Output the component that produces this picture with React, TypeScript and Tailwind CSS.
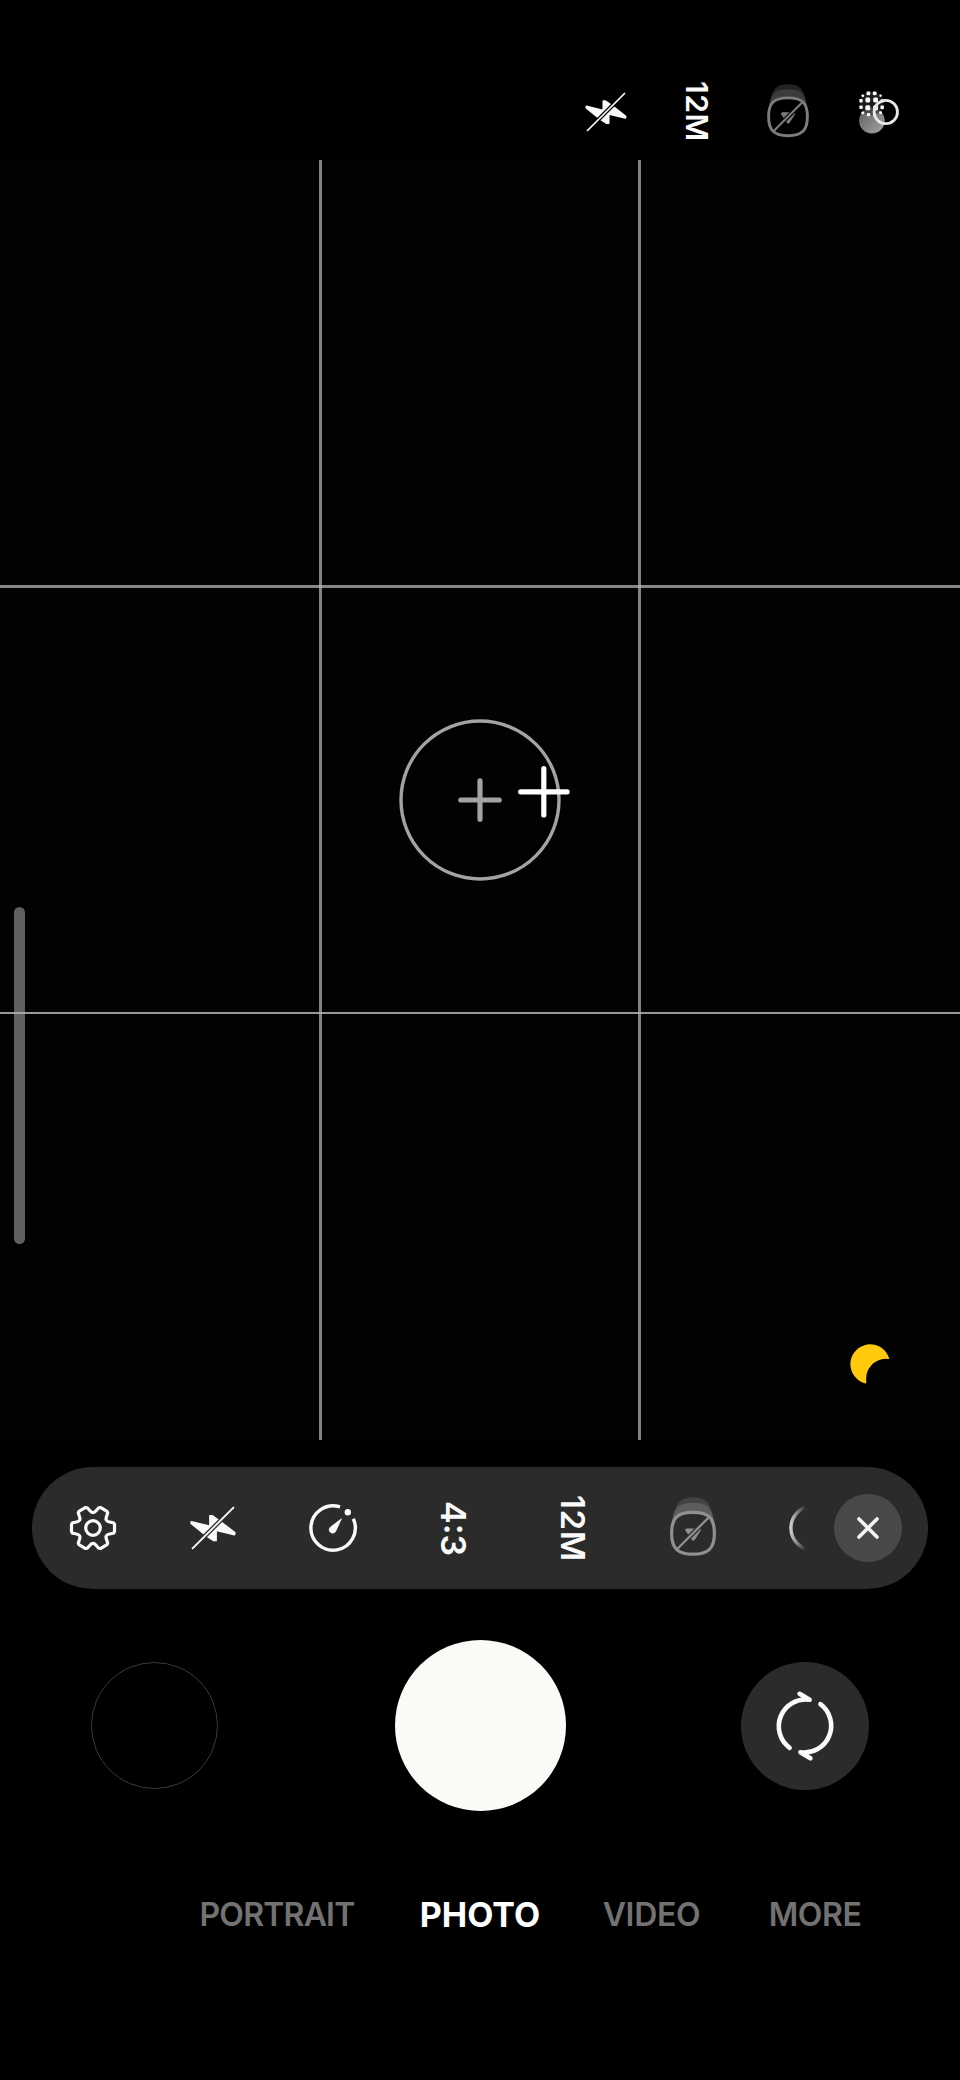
import React from "react";
import clsx from "clsx";

const modes = [
    { label: "PORTRAIT", box: "w-[154px] ml-[200px] tracking-[-0.8px]", active: false },
    { label: "PHOTO", box: "w-[120px] ml-[66px]", active: true },
    { label: "VIDEO", box: "w-[97px] ml-[63px] tracking-[-0.3px]", active: false },
    { label: "MORE", box: "w-[92px] ml-[69px] tracking-[-0.4px]", active: false },
];

// One tooth of the gear, pointing right; the other five are rotations of it
const tooth = [
    [16.5, -6],
    [20.4, -5.2],
    [21.5, -3.8],
    [21.5, 3.8],
    [20.4, 5.2],
    [16.5, 6],
    [11.8, 6.8],
];

function gearPath() {
    let d = "";
    for (let i = 0; i < 6; i++) {
        const a = (i * Math.PI) / 3;
        const p = tooth.map(([x, y]) => {
            const px = x * Math.cos(a) - y * Math.sin(a);
            const py = x * Math.sin(a) + y * Math.cos(a);
            return `${px.toFixed(2)} ${py.toFixed(2)}`;
        });
        const b = a + Math.PI / 3;
        const nx = 16.5 * Math.cos(b) + 6 * Math.sin(b);
        const ny = 16.5 * Math.sin(b) - 6 * Math.cos(b);
        d += `${i === 0 ? "M" : "L"}${p[0]}L${p[1]}L${p[2]}L${p[3]}L${p[4]}L${p[5]}Q${p[6]} ${nx.toFixed(2)} ${ny.toFixed(2)}`;
    }
    return d + "Z";
}

function GearIcon() {
    return (
        <svg viewBox="-32 -32 64 64" className="h-16 w-16" fill="none" stroke="#fafafa" strokeWidth="3.2" strokeLinejoin="round">
            <path d={gearPath()} />
            <circle r="7.3" />
        </svg>
    );
}

function FlashOffIcon({ className, bg }: { className: string; bg: string }) {
    return (
        <svg viewBox="-32 -32 64 64" className={className}>
            <path
                d="M-21.6 -6.2L-3 -1.6V-12.2L-0.6 -12L7 -6.6L21.7 4.8L21.4 6.6L3 2.2V12.4H0.8L-7 7.4L-21.8 -4.6Z"
                fill="#fafafa"
                stroke="#fafafa"
                strokeWidth="1.8"
                strokeLinejoin="round"
            />
            <path d="M-20.4 20.4L20.4 -20.4" stroke={bg} strokeWidth="4.4" />
            <path d="M-20.4 20.4L20.4 -20.4" stroke="#fafafa" strokeWidth="1.9" strokeLinecap="round" />
        </svg>
    );
}

function TimerIcon() {
    return (
        <svg viewBox="-32 -32 64 64" className="h-16 w-16">
            <path d="M7 -21.1A22.2 22.2 0 1 0 20.3 -9.2" fill="none" stroke="#fafafa" strokeWidth="3.4" />
            <circle cx="14.8" cy="-15.8" r="3.2" fill="#fafafa" />
            <path d="M8.4 -9.2L-2.4 -1A3.4 3.4 0 1 0 2.8 3Z" fill="#fafafa" stroke="#fafafa" strokeWidth="0.8" strokeLinejoin="round" />
        </svg>
    );
}

function MotionOffIcon({ className, bg }: { className: string; bg: string }) {
    const onBlack = bg === "#000000";
    const line = onBlack ? "#7c7c7c" : "#909090";
    return (
        <svg viewBox="-32 -32 64 64" className={className}>
            <path d="M-19 2V-14C-17 -26 -12 -30.6 0 -30.6S17 -26 19 -14V2Z" fill={onBlack ? "#242424" : "#434343"} />
            <path d="M-20.5 4V-9C-18.5 -21 -13 -25.2 0 -25.2S18.5 -21 20.5 -9V4Z" fill={onBlack ? "#3c3c3c" : "#5c5c5c"} />
            <path
                d="M0 -15.6C16 -15.6 21.4 -9.8 21.4 5.2S15.4 26.2 0 26.2S-21.4 20.2 -21.4 5.2S-16 -15.6 0 -15.6Z"
                fill={bg}
                stroke={line}
                strokeWidth="3.2"
            />
            <path d="M-6.4 0.4H6.8Q8.8 0.8 7.6 2.8L1.6 12Q0.4 13.4 -1 12L-7.4 2.8Q-8.4 0.8 -6.4 0.4Z" fill={line} />
            <path d="M-14.6 19.8L15 -9.8" stroke={bg} strokeWidth="4.8" />
            <path d="M-16 21.2L16.4 -11.2" stroke={line} strokeWidth="2.3" />
        </svg>
    );
}

const dots = [
    [-10.6, -18.6, 1.9], [-4.3, -18.6, 1.9],
    [-16.2, -16.2, 1.3], [1.6, -16.4, 1.2],
    [-18, -11.2, 1.7], [-11.2, -12, 2.4], [-3.4, -12, 2.4], [3.2, -11.2, 1.6],
    [-18, -4.8, 1.7], [-11.2, -4.2, 2.5], [-3.4, -4.2, 2.5], [3.2, -4.6, 1.8],
    [-16.2, 0.8, 1.4], [-10.4, 2.6, 1.7], [-4.3, 2.6, 1.6], [1.6, 0.6, 1.4],
];

function FilterIcon() {
    return (
        <svg viewBox="-32 -32 64 64" className="h-16 w-16">
            <defs>
                <linearGradient id="ball" x1="0" y1="0" x2="1" y2="1">
                    <stop offset="0" stopColor="#5c5c5c" />
                    <stop offset="1" stopColor="#a6a6a6" />
                </linearGradient>
            </defs>
            <circle cx="-7.1" cy="8.8" r="12.8" fill="url(#ball)" />
            <circle cx="-7.3" cy="-8.4" r="12" fill="#303030" fillOpacity="0.6" />
            {dots.map(([x, y, r]) => (
                <rect key={`${x},${y}`} x={x - r} y={y - r} width={r * 2} height={r * 2} rx={r * 0.6} fill="#fafafa" />
            ))}
            <circle cx="6.8" cy="0" r="11.7" fill="none" stroke="#e8e8e8" strokeWidth="2.8" />
        </svg>
    );
}

function NextIcon() {
    return (
        <svg viewBox="-32 -32 64 64" className="h-16 w-16 shrink-0">
            <defs>
                <linearGradient id="fade" gradientUnits="userSpaceOnUse" x1="-24" y1="0" x2="-7.5" y2="0">
                    <stop offset="0" stopColor="#dddddd" />
                    <stop offset="1" stopColor="#dddddd" stopOpacity="0" />
                </linearGradient>
            </defs>
            <circle r="22" fill="none" stroke="url(#fade)" strokeWidth="3.4" />
        </svg>
    );
}

function FlipIcon() {
    return (
        <svg viewBox="-40 -40 80 80" className="h-20 w-20" fill="none" stroke="#fafafa" strokeWidth="4.6" strokeLinecap="round" strokeLinejoin="round">
            <path d="M-15.4 21.8A26.8 26.8 0 0 1 4.6 -26.2L-5.4 -32.2" />
            <path d="M15.4 -21.8A26.8 26.8 0 0 1 -4.6 26.2L5.4 32.2" />
        </svg>
    );
}

function Viewfinder() {
    return (
        <main className="relative h-[1280px] bg-[#020202]">
            {/* Zoom handle */}
            <div className="absolute left-[14px] top-[747px] h-[337px] w-[11px] rounded-full bg-[#606060]" />

            {/* Rule of thirds */}
            <div className="absolute left-[319px] top-0 h-full w-[3px] bg-[#999999]/85" />
            <div className="absolute left-[638px] top-0 h-full w-[3px] bg-[#999999]/85" />
            <div className="absolute left-0 top-[425px] h-[3px] w-full bg-[#b4b4b4]/75" />
            <div className="absolute left-0 top-[852px] h-[2px] w-full bg-[#b4b4b4]/85" />

            {/* Level guide */}
            <svg viewBox="0 0 200 180" className="absolute left-[380px] top-[550px] h-[180px] w-[200px]" fill="none" strokeLinecap="round">
                <circle cx="100" cy="90" r="79" stroke="#a3a3a3" strokeWidth="3.4" />
                <path d="M80.8 90H119.2M100 70.8V109.2" stroke="#a3a3a3" strokeWidth="5.2" />
                <path d="M140.7 81.8H187.1M163.8 58.6V105" stroke="#ffffff" strokeWidth="5.2" />
            </svg>

            {/* Night mode */}
            <svg viewBox="-24 -24 48 48" className="absolute left-[846px] top-[1180px] h-12 w-12">
                <path d="M19 -6A19.8 19.8 0 1 0 -5.2 19.2C-3.6 20 -3.6 18.6 -3.8 16.4A20 20 0 0 1 16 -5.3C18.4 -5 20 -4.4 19 -6Z" fill="#ffc90c" />
            </svg>
        </main>
    );
}

export default function App() {
    return (
        <div className="flex h-[2080px] w-[960px] flex-col overflow-hidden bg-black font-['Inter',sans-serif] text-[#fafafa]">
            {/* Status row */}
            <header className="flex h-40 items-center pl-[560px] pt-16">
                <div className="flex w-[91px] justify-center">
                    <FlashOffIcon className="h-[58px] w-[58px]" bg="#000000" />
                </div>
                <div className="flex w-[91px] justify-center">
                    <span className="pb-[2px] text-[30px] font-semibold leading-9 tracking-[0.6px] [writing-mode:vertical-rl]">12M</span>
                </div>
                <div className="flex w-[91px] justify-center">
                    <MotionOffIcon className="h-[58px] w-[58px]" bg="#000000" />
                </div>
                <div className="flex w-[91px] justify-center">
                    <FilterIcon />
                </div>
            </header>

            <Viewfinder />

            {/* Quick settings */}
            <section className="ml-8 mt-[27px] flex h-[122px] w-[896px] shrink-0 items-center rounded-full bg-[#2b2b2b] pl-[1px]">
                <div className="flex w-[120px] justify-center">
                    <GearIcon />
                </div>
                <div className="flex w-[120px] justify-center">
                    <FlashOffIcon className="h-16 w-16" bg="#2b2b2b" />
                </div>
                <div className="flex w-[120px] justify-center">
                    <TimerIcon />
                </div>
                <div className="flex w-[120px] justify-center">
                    <span className="pt-[1px] text-[34px] font-semibold leading-10 [writing-mode:vertical-rl]">4:3</span>
                </div>
                <div className="flex w-[120px] justify-center">
                    <span className="text-[33px] font-semibold leading-10 tracking-[0.6px] [writing-mode:vertical-rl]">12M</span>
                </div>
                <div className="flex w-[120px] justify-center">
                    <MotionOffIcon className="h-16 w-16" bg="#2b2b2b" />
                </div>
                <div className="flex w-[81px] pl-7">
                    <NextIcon />
                </div>
                <button className="flex h-[68px] w-[68px] items-center justify-center rounded-full bg-[#494949]">
                    <svg viewBox="-16 -16 32 32" className="h-8 w-8" stroke="#f4f4f4" strokeWidth="3.6" strokeLinecap="round">
                        <path d="M-9 -9L9 9M9 -9L-9 9" />
                    </svg>
                </button>
            </section>

            {/* Capture controls */}
            <section className="mt-[51px] flex h-[171px] shrink-0 items-center justify-between pl-[91px] pr-[91px]">
                <button className="h-[127px] w-[127px] rounded-full border border-[#3a3a3a]" />
                <button className="ml-[1px] h-[171px] w-[171px] rounded-full bg-[#fafbf6]" />
                <button className="flex h-32 w-32 items-center justify-center rounded-full bg-[#2b2b2b]">
                    <FlipIcon />
                </button>
            </section>

            {/* Camera modes */}
            <nav className="mt-[84px] flex h-10 shrink-0 items-center">
                {modes.map((mode) => (
                    <button
                        key={mode.label}
                        className={clsx(
                            "flex shrink-0 justify-center whitespace-nowrap",
                            mode.box,
                            mode.active ? "text-[34px] font-bold leading-10 text-white" : "text-[32px] font-semibold leading-10 text-[#727272]"
                        )}
                    >
                        {mode.label}
                    </button>
                ))}
            </nav>
        </div>
    );
}
